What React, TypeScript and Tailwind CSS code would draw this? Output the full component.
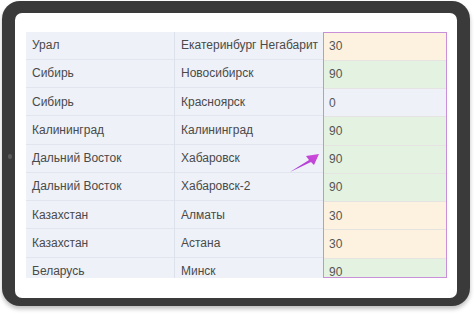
import React from 'react';

type Row = { region: string; city: string; value: string };

const rows: Row[] = [
  { region: 'Урал', city: 'Екатеринбург Негабарит', value: '30' },
  { region: 'Сибирь', city: 'Новосибирск', value: '90' },
  { region: 'Сибирь', city: 'Красноярск', value: '0' },
  { region: 'Калининград', city: 'Калининград', value: '90' },
  { region: 'Дальний Восток', city: 'Хабаровск', value: '90' },
  { region: 'Дальний Восток', city: 'Хабаровск-2', value: '90' },
  { region: 'Казахстан', city: 'Алматы', value: '30' },
  { region: 'Казахстан', city: 'Астана', value: '30' },
  { region: 'Беларусь', city: 'Минск', value: '90' },
];

// цвет ячейки по сроку
function valueBg(v: string): string {
  if (v === '30') return 'bg-[#fdf2e0]';
  if (v === '90') return 'bg-[#e4f2e2]';
  return 'bg-[#eef1f7]';
}

function Arrow() {
  return (
    <svg className="absolute left-[288px] top-[152px]" width="34" height="22" viewBox="0 0 34 22">
      <defs>
        <linearGradient id="arr" x1="0" y1="1" x2="1" y2="0">
          <stop offset="0" stopColor="#a03ad6" />
          <stop offset="1" stopColor="#d04ad8" />
        </linearGradient>
      </defs>
      <path d="M2 20 L21 8 L18 4 L31 2 L26 13 L23 10 Z" fill="url(#arr)" />
    </svg>
  );
}

export default function App() {
  return (
    <div
      className="relative w-[474px] h-[315px] bg-white overflow-hidden"
      style={{ fontFamily: '"Liberation Sans", Arial, sans-serif' }}
    >
      <div className="relative ml-[2px] mt-[1px] w-[468px] h-[305px] rounded-[18px] bg-[#3a3a3a] pl-[13px] pr-[13px] pt-[12px] pb-[8px] shadow-[0_3px_4px_rgba(0,0,0,0.25)]">
        {/* камера */}
        <div className="absolute left-[6px] top-[153px] w-[4px] h-[5px] rounded-full bg-[#5a5a5a]" />
        <div className="h-full rounded-[7px] bg-white pl-[11px] pt-[18.5px] overflow-hidden">
          <div className="flex w-[421px] h-[246.5px] overflow-hidden text-[12px] text-[#4a4a4a] whitespace-nowrap">
            <div className="w-[149px] bg-[#eef1f7] border-r border-[#dde1ea]">
              {rows.map((r, i) => (
                <div key={i} className="h-[28.25px] flex items-center pl-[6px] border-b border-[#e2e5ed]">
                  {r.region}
                </div>
              ))}
            </div>
            <div className="w-[148px] bg-[#eef1f7]">
              {rows.map((r, i) => (
                <div key={i} className="h-[28.25px] flex items-center pl-[6px] border-b border-[#e2e5ed]">
                  {r.city}
                </div>
              ))}
            </div>
            <div className="w-[124px] border border-[#c98fd9] overflow-hidden text-[#555]">
              {rows.map((r, i) => (
                <div key={i} className={`h-[28.25px] flex items-center pl-[5px] border-b border-[#e6e3e3] ${valueBg(r.value)}`}>
                  {r.value}
                </div>
              ))}
            </div>
          </div>
        </div>
      </div>
      <Arrow />
    </div>
  );
}
